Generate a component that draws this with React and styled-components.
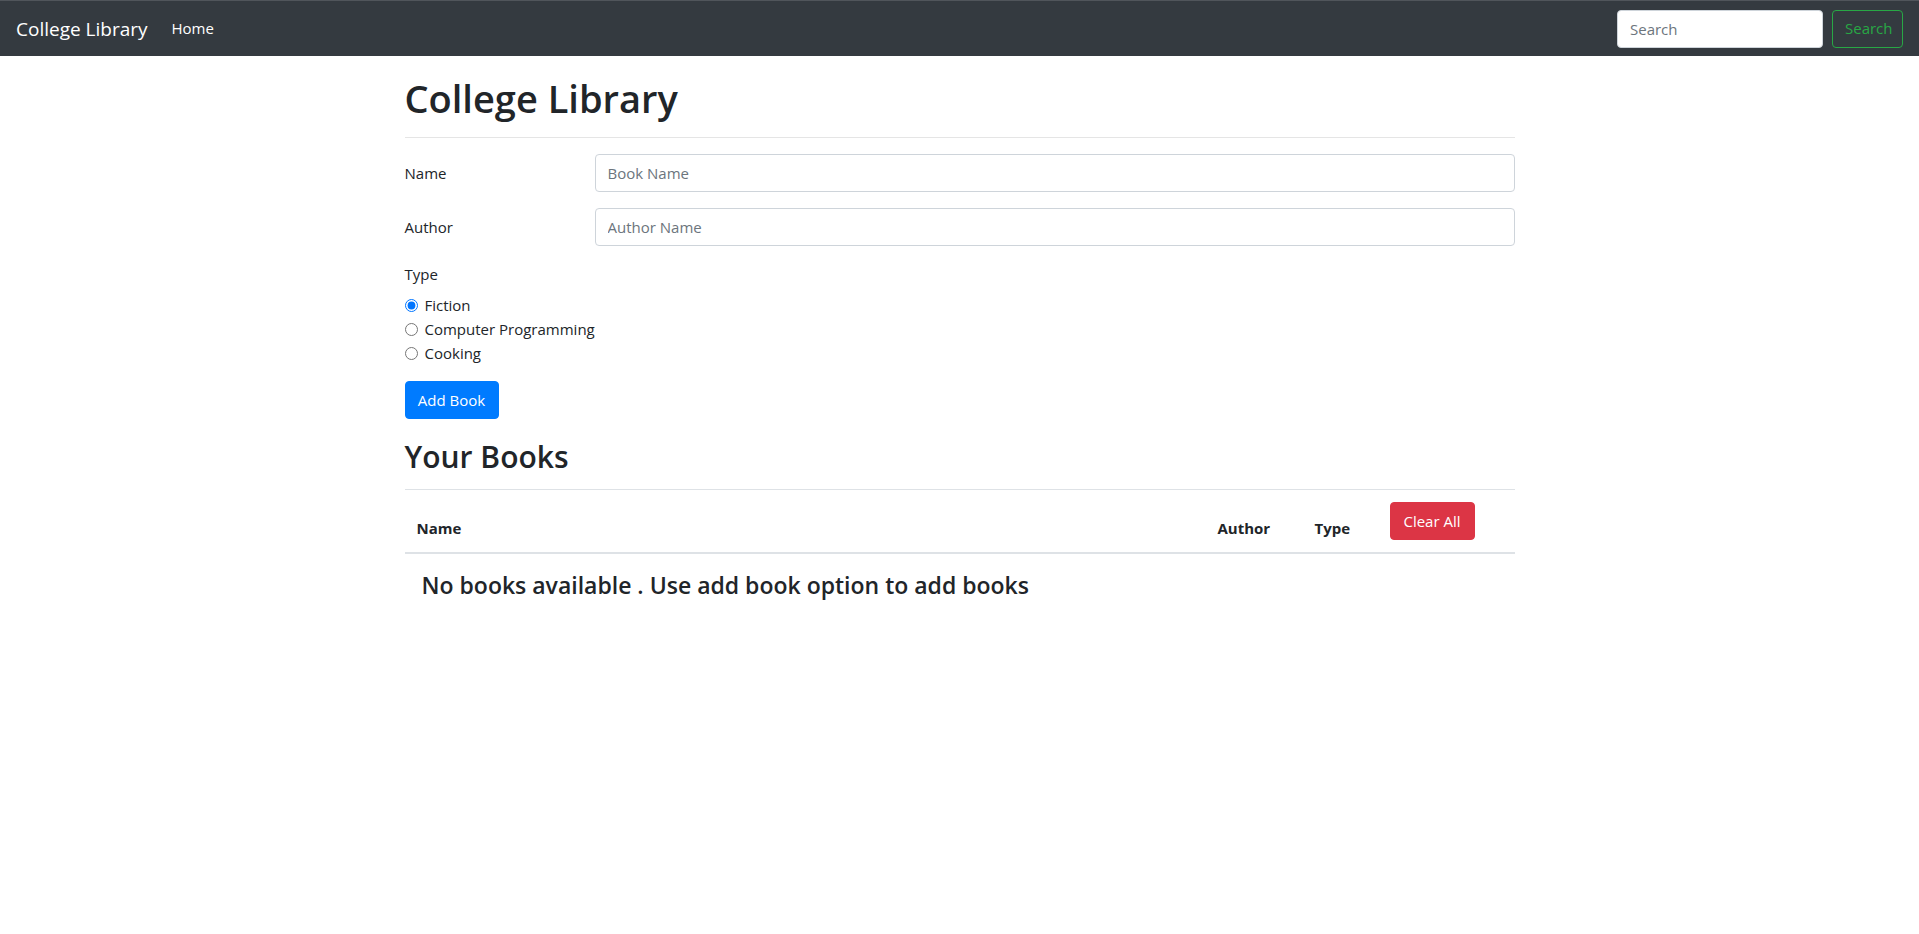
import React, { useState } from 'react';
import styled, { createGlobalStyle } from 'styled-components';

const GlobalStyle = createGlobalStyle`
    * { box-sizing: border-box; }
    body {
        margin: 0;
        font-family: "Open Sans", "Noto Sans", sans-serif;
        font-size: 16px;
        line-height: 1.5;
        color: #212529;
        background: #fff;
    }
`

const Navbar = styled.nav`
    height: 56px;
    background-color: #343a40;
    border-top: 1px solid #50555b;
    padding: 0 16px;
    display: flex;
    align-items: center;
`
const Brand = styled.a`
    color: #fff;
    font-size: 19px;
    line-height: 30px;
    margin-right: 16px;
    text-decoration: none;
`
const NavLink = styled.a`
    color: #fff;
    font-size: 15px;
    padding: 8px;
    text-decoration: none;
`
const SearchForm = styled.form`
    margin-left: auto;
    display: flex;
    align-items: center;
    gap: 9px;
`
const SearchInput = styled.input`
    width: 206px;
    height: 38px;
    padding: 6px 12px;
    font: inherit;
    font-size: 15px;
    color: #495057;
    border: 1px solid #ced4da;
    border-radius: 4px;
    outline: none;
    &::placeholder { color: #6c757d; }
`
const Button = styled.button`
    height: 38px;
    padding: 0 12px;
    font: inherit;
    font-size: 15px;
    font-weight: 400;
    white-space: nowrap;
    border-radius: 4px;
    cursor: pointer;
    color: ${p => p.outline ? p.color : '#fff'};
    background: ${p => p.outline ? 'transparent' : p.color};
    border: 1px solid ${p => p.color};
    width: ${p => p.width || 'auto'};
`

const Container = styled.main`
    width: 1110px;
    margin: 18px auto 0;
`
const Title = styled.h1`
    font-size: 38px;
    font-weight: 600;
    line-height: 48px;
    margin: 0;
`
const Rule = styled.hr`
    border: 0;
    border-top: 1px solid rgba(0, 0, 0, 0.1);
    margin: 15px 0 16px;
`
const FormRow = styled.div`
    display: grid;
    grid-template-columns: 175px 1fr;
    column-gap: 15px;
    align-items: center;
    margin-bottom: 16px;
`
const Label = styled.label`
    font-size: 15px;
`
const TextInput = styled.input`
    height: 38px;
    width: 100%;
    padding: 6px 12px;
    font: inherit;
    font-size: 15px;
    border: 1px solid #ced4da;
    border-radius: 4px;
    outline: none;
    &::placeholder { color: #6c757d; }
`
const Fieldset = styled.fieldset`
    border: 0;
    margin: 0 0 16px;
    padding: 0;
`
const Legend = styled.legend`
    font-size: 15px;
    line-height: 24px;
    padding: 0 0 7px;
`
const Check = styled.label`
    display: flex;
    align-items: center;
    height: 24px;
    font-size: 15px;
    input {
        width: 13px;
        height: 13px;
        margin: 0 7px 0 0;
    }
`
const Heading = styled.h2`
    font-size: 30px;
    font-weight: 600;
    line-height: 38px;
    margin: 19px 0 13px;
`
const Table = styled.table`
    width: 100%;
    border-collapse: collapse;
    th {
        text-align: left;
        vertical-align: bottom;
        padding: 12px;
        font-size: 15px;
        font-weight: 700;
        line-height: 24px;
        border-top: 1px solid #dee2e6;
        border-bottom: 2px solid #dee2e6;
    }
`
const Empty = styled.h4`
    font-size: 23px;
    font-weight: 600;
    line-height: 29px;
    margin: 0;
    padding: 17px 0 0 17px;
`

const types = ['Fiction', 'Computer Programming', 'Cooking']

const App = () => {
    const [type, setType] = useState('Fiction')
    return (
        <>
            <GlobalStyle />
            <Navbar>
                <Brand href="#">College Library</Brand>
                <NavLink href="#">Home</NavLink>
                <SearchForm onSubmit={e => e.preventDefault()}>
                    <SearchInput type="search" placeholder="Search" />
                    <Button outline color="#28a745" width="71px">Search</Button>
                </SearchForm>
            </Navbar>
            <Container>
                <Title>College Library</Title>
                <Rule />
                <form onSubmit={e => e.preventDefault()}>
                    <FormRow>
                        <Label htmlFor="bookName">Name</Label>
                        <TextInput id="bookName" placeholder="Book Name" />
                    </FormRow>
                    <FormRow>
                        <Label htmlFor="author">Author</Label>
                        <TextInput id="author" placeholder="Author Name" />
                    </FormRow>
                    <Fieldset>
                        <Legend>Type</Legend>
                        {types.map(t => (
                            <Check key={t}>
                                <input type="radio" name="type" checked={type === t} onChange={() => setType(t)} />
                                {t}
                            </Check>
                        ))}
                    </Fieldset>
                    <Button color="#007bff" width="94px">Add Book</Button>
                </form>
                <Heading>Your Books</Heading>
                <Table>
                    <thead>
                        <tr>
                            <th>Name</th>
                            <th style={{ width: 97 }}>Author</th>
                            <th style={{ width: 75 }}>Type</th>
                            <th style={{ width: 137 }}>
                                <Button color="#dc3545" width="85px">Clear All</Button>
                            </th>
                        </tr>
                    </thead>
                </Table>
                <Empty>No books available . Use add book option to add books</Empty>
            </Container>
        </>
    );
}

export default App;
